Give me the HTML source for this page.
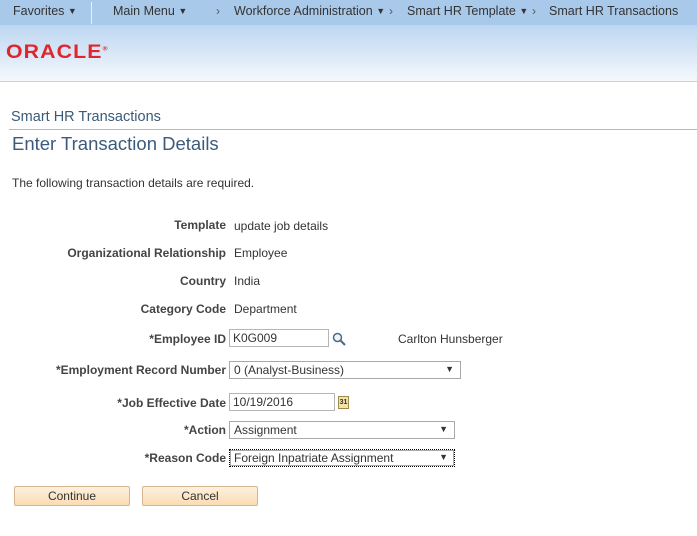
<!DOCTYPE html>
<html><head><meta charset="utf-8"><style>
*{margin:0;padding:0;box-sizing:border-box}
body{width:697px;height:536px;overflow:hidden;background:#fff;font-family:"Liberation Sans",Arial,sans-serif;font-size:12px;color:#333;position:relative}
.nav{position:absolute;left:0;top:0;width:697px;height:25px;background:#a9c9ea;font-size:12.5px;color:#333}
.nav span{position:absolute;top:4px;white-space:nowrap}
.nav .ch{color:#555;font-size:12px}
.nav .dd{font-size:9px;position:relative;top:-1px}
.sep{position:absolute;left:91px;top:2px;width:1px;height:22px;background:#e8f1fa}
.hdr{position:absolute;left:0;top:25px;width:697px;height:57px;background:linear-gradient(#bcd6f1,#f4f8fd);border-bottom:1px solid #c9d3dc}
.logo{position:absolute;left:6px;top:42px;color:#e0262d;font-size:19px;font-weight:bold;letter-spacing:1px;transform:scaleX(1.12);transform-origin:left;white-space:nowrap}
.t1{position:absolute;left:11px;top:109px;font-size:14.5px;color:#3b5a78}
.rule{position:absolute;left:9px;top:129px;width:688px;height:1px;background:#b8b8b8}
.t2{position:absolute;left:12px;top:133px;font-size:18.5px;color:#3c5b7c}
.intro{position:absolute;left:12px;top:176px}
.lbl{position:absolute;right:471px;font-weight:bold;color:#444;white-space:nowrap}
.val{position:absolute;left:234px;white-space:nowrap}
.inp{position:absolute;height:18px;border:1px solid #b5b5b5;background:#fff;padding:1px 3px;font-size:12px}
.sel{position:absolute;height:18px;border:1px solid #a9a9a9;background:#fff;padding:1px 4px;font-size:12px}
.sel:after{content:"▼";position:absolute;right:6px;top:2px;font-size:9px;color:#333}
.btn{position:absolute;top:486px;height:20px;border:1px solid #d7b58e;border-radius:2px;background:linear-gradient(#fdf1dd,#fadcb4);text-align:center;font-size:12px;line-height:18px;color:#333}
</style></head><body>
<div class="nav">
<span style="left:13px">Favorites <span class="dd" style="position:relative">▼</span></span>
<div class="sep"></div>
<span style="left:113px">Main Menu <span class="dd" style="position:relative">▼</span></span>
<span class="ch" style="left:216px">›</span>
<span style="left:234px">Workforce Administration <span class="dd" style="position:relative">▼</span></span>
<span class="ch" style="left:389px">›</span>
<span style="left:407px">Smart HR Template <span class="dd" style="position:relative">▼</span></span>
<span class="ch" style="left:532px">›</span>
<span style="left:549px">Smart HR Transactions</span>
</div>
<div class="hdr"></div>
<div class="logo">ORACLE<sup style="font-size:6px">®</sup></div>
<div class="t1">Smart HR Transactions</div>
<div class="rule"></div>
<div class="t2">Enter Transaction Details</div>
<div class="intro">The following transaction details are required.</div>

<div class="lbl" style="top:218px">Template</div><div class="val" style="top:219px">update job details</div>
<div class="lbl" style="top:246px">Organizational Relationship</div><div class="val" style="top:246px">Employee</div>
<div class="lbl" style="top:274px">Country</div><div class="val" style="top:274px">India</div>
<div class="lbl" style="top:302px">Category Code</div><div class="val" style="top:302px">Department</div>

<div class="lbl" style="top:332px">*Employee ID</div>
<div class="inp" style="left:229px;top:329px;width:100px">K0G009</div>
<svg style="position:absolute;left:332px;top:332px" width="14" height="14" viewBox="0 0 14 14"><circle cx="5.5" cy="5.5" r="4" fill="#eef4fa" stroke="#4a6a8a" stroke-width="1.5"/><path d="M8.5 8.5L13 13" stroke="#4a6a8a" stroke-width="2"/></svg>
<div class="val" style="left:398px;top:332px">Carlton Hunsberger</div>

<div class="lbl" style="top:363px">*Employment Record Number</div>
<div class="sel" style="left:229px;top:361px;width:232px">0 (Analyst-Business)</div>

<div class="lbl" style="top:396px">*Job Effective Date</div>
<div class="inp" style="left:229px;top:393px;width:106px">10/19/2016</div>
<div style="position:absolute;left:338px;top:396px;width:11px;height:13px;background:#f4e3a8;border:1px solid #9c8a4a;font-size:7px;font-weight:bold;text-align:center;line-height:12px">31</div>

<div class="lbl" style="top:423px">*Action</div>
<div class="sel" style="left:229px;top:421px;width:226px">Assignment</div>

<div class="lbl" style="top:451px">*Reason Code</div>
<div class="sel" style="left:229px;top:449px;width:226px;border:1px dotted #000;outline:1px solid #a9a9a9;outline-offset:-2px">Foreign Inpatriate Assignment</div>

<div class="btn" style="left:14px;width:116px">Continue</div>
<div class="btn" style="left:142px;width:116px">Cancel</div>
</body></html>
